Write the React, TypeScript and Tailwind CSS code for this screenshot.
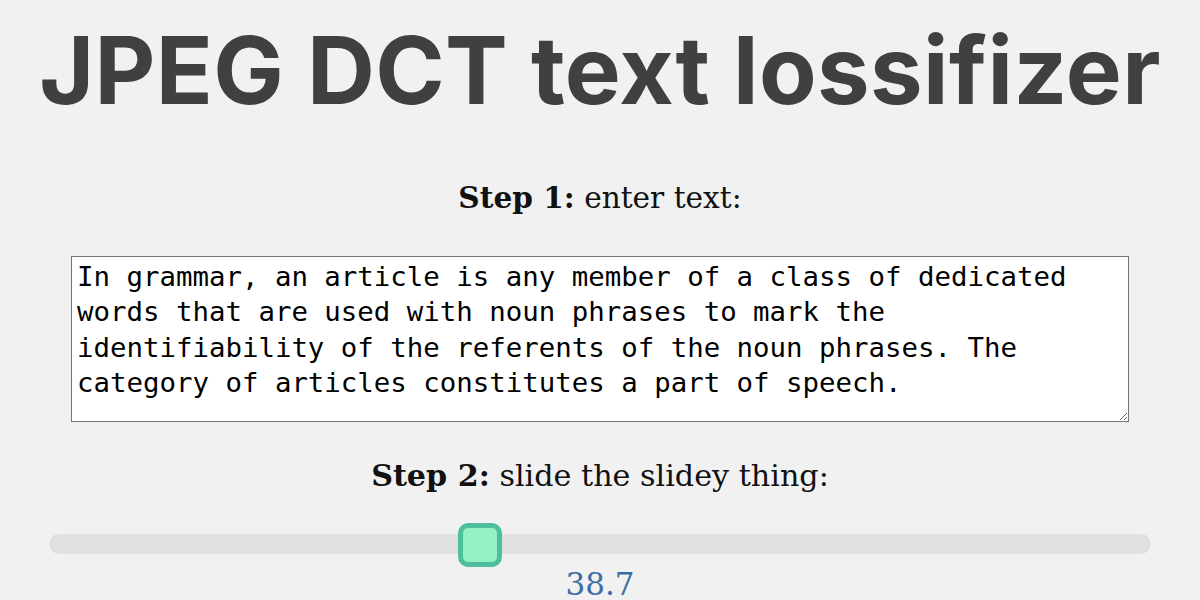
import React from "react";

const text =
  "In grammar, an article is any member of a class of dedicated words that are used with noun phrases to mark the identifiability of the referents of the noun phrases. The category of articles constitutes a part of speech.";

export default function App() {
  const value = 38.7;
  return (
    <div className="w-[1200px] h-[600px] overflow-hidden bg-[#f1f1f1] flex flex-col items-center">
      <h1 className="mt-[23px] text-[94px] leading-[94px] font-bold tracking-[0.4px] text-[#404040] whitespace-nowrap font-['Inter','Open_Sans',sans-serif]">
        JPEG DCT text lossifizer
      </h1>
      <p className="mt-[63px] text-[29.6px] leading-[36px] text-[#111] font-['DejaVu_Serif',serif]">
        <b>Step 1:</b> enter text:
      </p>
      <textarea
        className="mt-[40px] w-[1058px] h-[170px] bg-white border border-[#767676] px-[5px] py-[2px] text-[27.4px] leading-[35.3px] text-black resize-y outline-none font-['DejaVu_Sans_Mono',monospace]"
        defaultValue={text}
      />
      <p className="mt-[36px] text-[30.2px] leading-[36px] text-[#111] font-['DejaVu_Serif',serif]">
        <b>Step 2:</b> slide the slidey thing:
      </p>
      <div className="mt-[40px] w-[1102px] h-[21px] rounded-full bg-[#e0e0e0] relative">
        <div
          className="absolute top-[-11px] w-[44px] h-[44px] rounded-[10px] border-[5px] border-[#4dbf9c] bg-[#93f1c4] -translate-x-1/2"
          style={{ left: `${22 + (value / 100) * 1058}px` }}
        />
      </div>
      <div className="mt-[14px] text-[31px] leading-[32px] text-[#3b6ea6] font-['DejaVu_Serif',serif]">
        {value}
      </div>
    </div>
  );
}
